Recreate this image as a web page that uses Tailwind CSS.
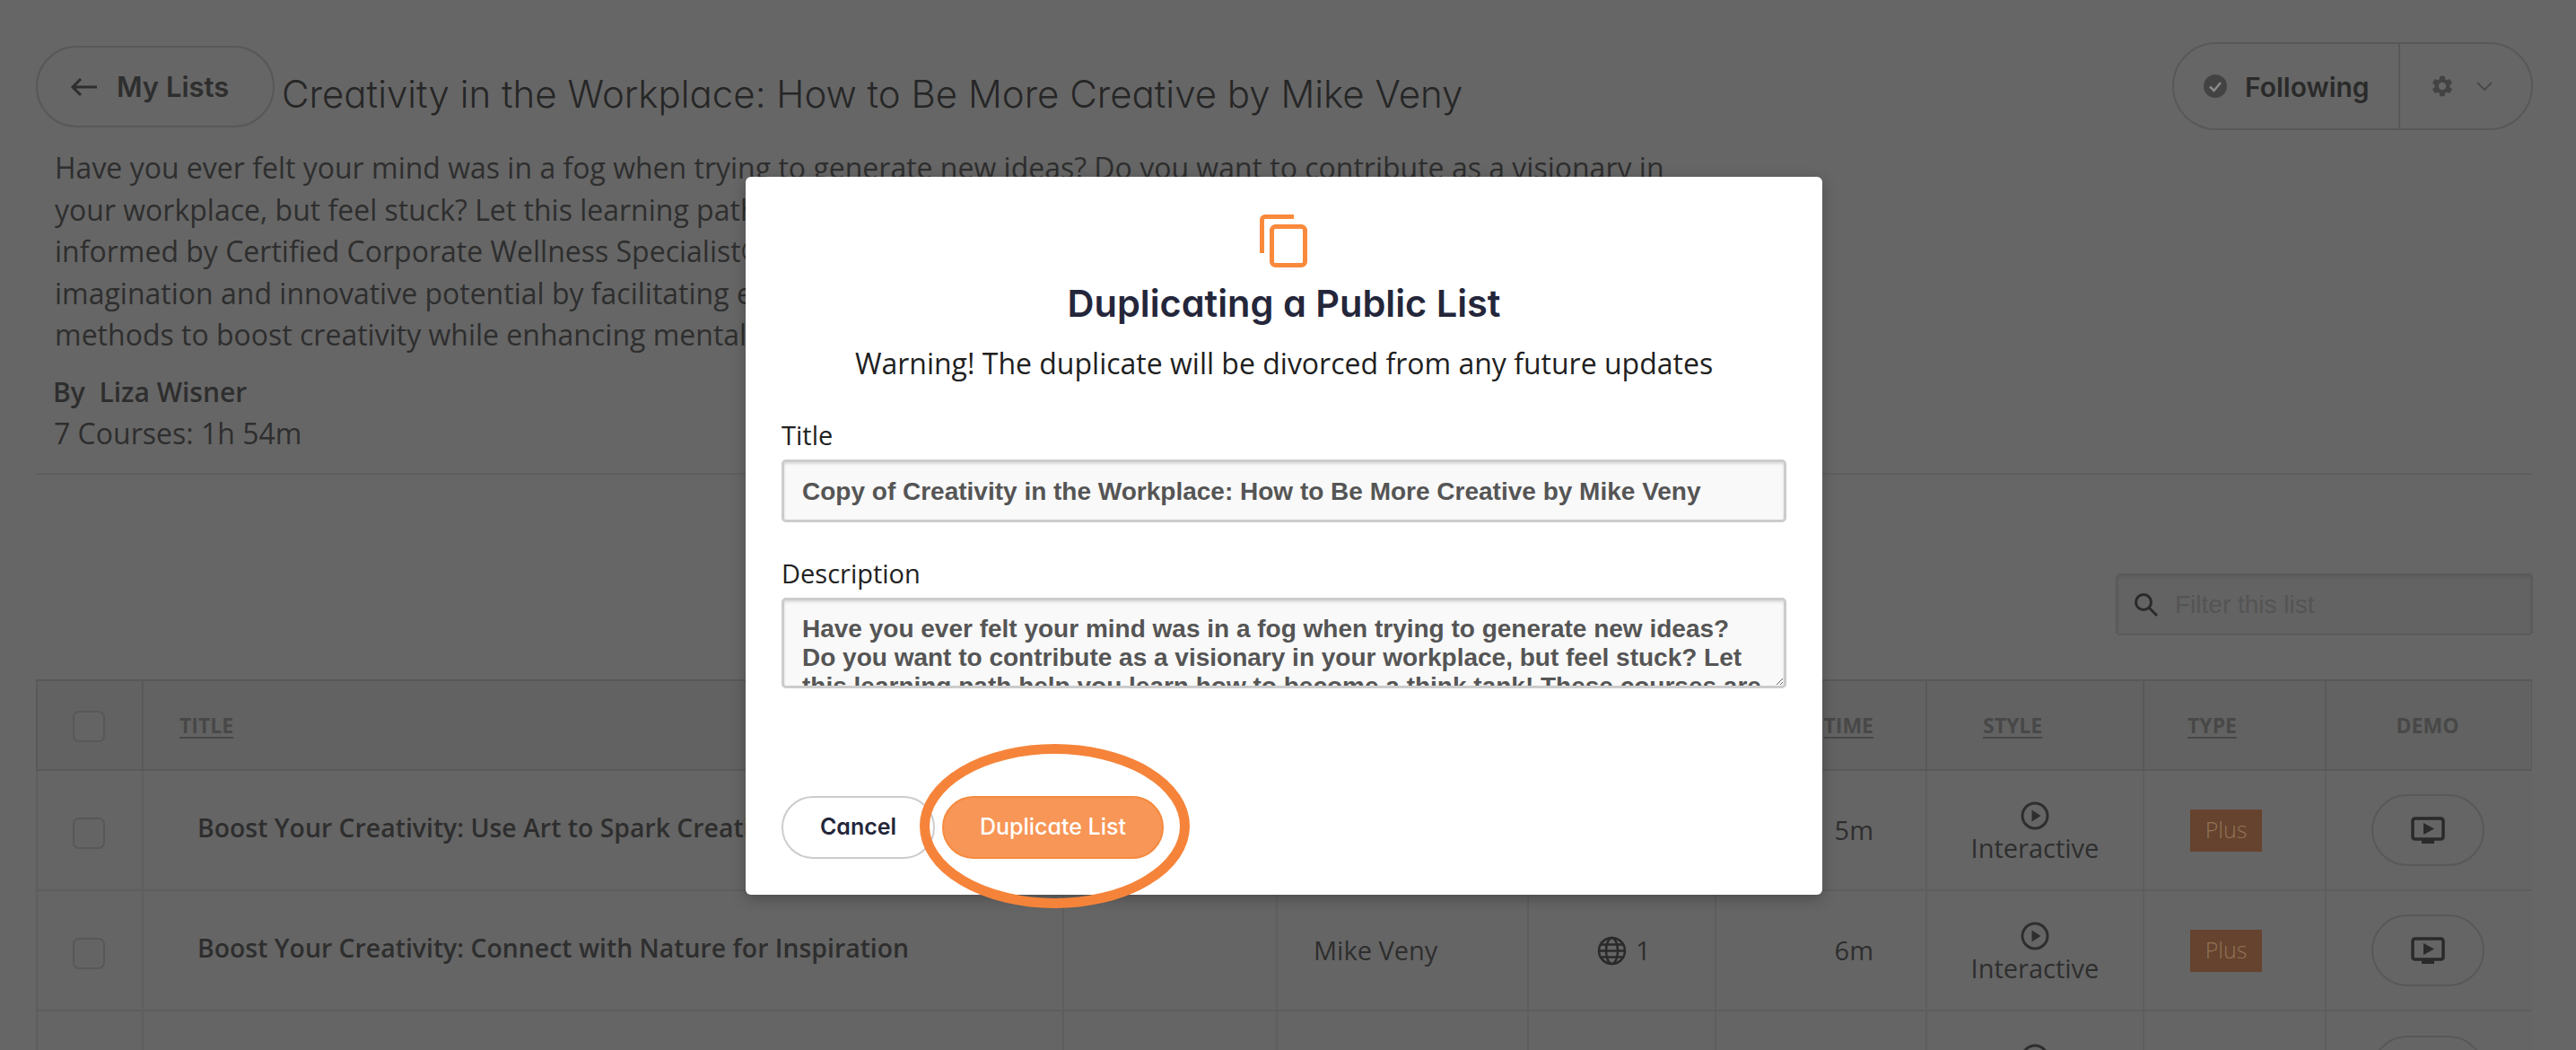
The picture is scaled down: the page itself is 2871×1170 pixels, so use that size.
<!DOCTYPE html>
<html lang="en">
  <head>
    <meta charset="UTF-8" />
    <title>Creativity in the Workplace</title>
    <script src="https://cdn.jsdelivr.net/npm/@tailwindcss/browser@4"></script>
  </head>

  <body class="relative w-[2871px] h-[1170px] overflow-hidden bg-[#666666] text-[#2e2e2e] font-['Open_Sans',sans-serif]">
    <!-- page behind the modal -->
    <div class="flex items-start pl-[40px] pr-[48px] pt-[47px]">
      <button class="mt-[4px] flex items-center w-[266px] h-[91px] rounded-[46px] border-2 border-[#585858] pl-[36px]">
        <svg class="w-[32px] h-[24px]" viewBox="0 0 32 24" fill="none" stroke="#2e2e2e" stroke-width="3">
          <path d="M30 12H3M12 3l-9 9 9 9" />
        </svg>
        <span class="ml-[20px] mt-[2px] text-[31px] font-semibold font-['Inter',sans-serif] [font-feature-settings:'cv11'] text-[#2e2e2e]">My Lists</span>
      </button>
      <h1 class="ml-[8px] mt-[29px] text-[42px] leading-[58px] font-light font-['Inter',sans-serif] [font-feature-settings:'cv11'] whitespace-nowrap text-[#262626]">Creativity in the Workplace: How to Be More Creative by Mike Veny</h1>
      <div class="ml-auto flex items-stretch w-[402px] h-[98px] rounded-[49px] border-2 border-[#585858]">
        <div class="flex items-center w-[250px] pl-[33px]">
          <svg class="w-[26px] h-[26px]" viewBox="0 0 26 26">
            <circle cx="13" cy="13" r="13" fill="#434343" />
            <path d="M7 13.5l4.5 4.5L19 9" fill="none" stroke="#8a8a8a" stroke-width="2.5" />
          </svg>
          <span class="ml-[20px] mt-[2px] text-[30px] font-semibold font-['Inter',sans-serif] [font-feature-settings:'cv11'] text-[#2a2a2a]">Following</span>
        </div>
        <div class="flex items-center border-l-2 border-[#585858] pl-[33px]">
          <svg class="w-[28px] h-[28px]" viewBox="0 0 24 24" fill="#434343">
            <path d="M19.14 12.94c.04-.3.06-.61.06-.94 0-.32-.02-.64-.07-.94l2.03-1.58a.49.49 0 0 0 .12-.61l-1.92-3.32a.488.488 0 0 0-.59-.22l-2.39.96c-.5-.38-1.03-.7-1.62-.94l-.36-2.54a.484.484 0 0 0-.48-.41h-3.84c-.24 0-.43.17-.47.41l-.36 2.54c-.59.24-1.13.57-1.62.94l-2.39-.96c-.22-.08-.47 0-.59.22L2.74 8.87c-.12.21-.08.47.12.61l2.03 1.58c-.05.3-.09.63-.09.94s.02.64.07.94l-2.03 1.58a.49.49 0 0 0-.12.61l1.92 3.32c.12.22.37.29.59.22l2.39-.96c.5.38 1.03.7 1.62.94l.36 2.54c.05.24.24.41.48.41h3.84c.24 0 .44-.17.47-.41l.36-2.54c.59-.24 1.13-.56 1.62-.94l2.39.96c.22.08.47 0 .59-.22l1.92-3.32c.12-.22.07-.47-.12-.61l-2.01-1.58zM12 15.6c-1.98 0-3.6-1.62-3.6-3.6s1.62-3.6 3.6-3.6 3.6 1.62 3.6 3.6-1.62 3.6-3.6 3.6z" />
          </svg>
          <svg class="ml-[23px] w-[20px] h-[14px]" viewBox="0 0 20 14" fill="none" stroke="#4a4a4a" stroke-width="2">
            <path d="M2 3l8 8 8-8" />
          </svg>
        </div>
      </div>
    </div>

    <p class="mt-[19px] ml-[61px] text-[32px] leading-[46.5px] whitespace-nowrap">
      Have you ever felt your mind was in a fog when trying to generate new ideas? Do you want to contribute as a visionary in<br />
      your workplace, but feel stuck? Let this learning path help you learn how to become a think tank! These courses are<br />
      informed by Certified Corporate Wellness Specialist©<br />
      imagination and innovative potential by facilitating e<br />
      methods to boost creativity while enhancing mental
    </p>
    <p class="mt-[17px] ml-[59px] text-[30px] leading-[46.5px] font-semibold">By&nbsp; Liza Wisner</p>
    <p class="ml-[60px] text-[32px] leading-[46px]">7 Courses: 1h 54m</p>
    <hr class="mt-[21px] ml-[40px] w-[2782px] border-t-2 border-[#5e5e5e]" />

    <div class="mt-[110px] ml-[2358px] flex items-center w-[465px] h-[69px] rounded-[5px] border-2 border-[#5a5a5a] bg-[#636363] shadow-[inset_0_2px_3px_#5a5a5a] pl-[18px]">
      <svg class="w-[28px] h-[28px]" viewBox="0 0 28 28" fill="none" stroke="#2a2a2a" stroke-width="3">
        <circle cx="11" cy="11" r="8.5" />
        <path d="M17 17l9 9" />
      </svg>
      <span class="ml-[18px] text-[28px] font-['Liberation_Sans',sans-serif] text-[#545454]">Filter this list</span>
    </div>

    <div class="mt-[49px] ml-[40px] w-[2782px] h-[413px] overflow-hidden">
      <table class="w-full table-fixed border-collapse bg-[#656565] text-[#2e2e2e]">
        <colgroup>
          <col class="w-[118px]" />
          <col class="w-[1026px]" />
          <col class="w-[238px]" />
          <col class="w-[280px]" />
          <col class="w-[209px]" />
          <col class="w-[235px]" />
          <col class="w-[242px]" />
          <col class="w-[203px]" />
          <col class="w-[231px]" />
        </colgroup>
        <thead>
          <tr class="h-[100px] bg-[#626262] text-[23px] font-bold text-[#484848]">
            <th class="border-2 border-[#595959] pr-[2px] text-center">
              <span class="inline-block align-middle w-[36px] h-[35px] rounded-[7px] border-2 border-[#585858] bg-[#646464]"></span>
            </th>
            <th class="border-2 border-[#595959] pl-[40px] text-left"><span class="underline underline-offset-4">TITLE</span></th>
            <th class="border-2 border-[#595959]"></th>
            <th class="border-2 border-[#595959]"></th>
            <th class="border-2 border-[#595959]"></th>
            <th class="border-2 border-[#595959] pr-[58px] text-right"><span class="underline underline-offset-4">TIME</span></th>
            <th class="border-2 border-[#595959] pl-[62px] text-left"><span class="underline underline-offset-4">STYLE</span></th>
            <th class="border-2 border-[#595959] pl-[48px] text-left"><span class="underline underline-offset-4">TYPE</span></th>
            <th class="border-2 border-[#595959] border-r-4 pr-[3px] text-center">DEMO</th>
          </tr>
        </thead>
        <tbody class="text-[29px]">
          <tr class="h-[134px]">
            <td class="border-2 border-[#5e5e5e] pr-[2px] text-center">
              <span class="inline-block align-middle w-[36px] h-[35px] rounded-[7px] border-2 border-[#585858] bg-[#646464]"></span>
            </td>
            <td class="border-2 border-[#5e5e5e] pl-[60px] pb-[6px] text-[28.400px] font-semibold whitespace-nowrap overflow-hidden">Boost Your Creativity: Use Art to Spark Creativity</td>
            <td class="border-2 border-[#5e5e5e]"></td>
            <td class="border-2 border-[#5e5e5e]"></td>
            <td class="border-2 border-[#5e5e5e]"></td>
            <td class="border-2 border-[#5e5e5e] pr-[58px] text-right">5m</td>
            <td class="border-2 border-[#5e5e5e] pt-[8px] text-center leading-[40px]">
              <svg class="mx-auto w-[32px] h-[32px]" viewBox="0 0 32 32">
                <circle cx="16" cy="16" r="14" fill="none" stroke="#2e2e2e" stroke-width="3" />
                <path d="M12.5 9.5l10 6.5-10 6.5z" fill="#2e2e2e" />
              </svg>
              Interactive
            </td>
            <td class="border-2 border-[#5e5e5e] pl-[51px]">
              <span class="flex items-center justify-center w-[80px] h-[47px] bg-[#66432e] text-[25px] font-light text-[#907358]">Plus</span>
            </td>
            <td class="border-2 border-[#5e5e5e] pr-[3px] text-center">
              <button class="inline-flex items-center justify-center align-middle w-[126px] h-[80px] rounded-[40px] border-2 border-[#585858]">
                <svg class="w-[38px] h-[30px]" viewBox="0 0 38 30">
                  <rect x="2" y="2" width="34" height="23" rx="2.5" fill="none" stroke="#2a2a2a" stroke-width="3.5" />
                  <path d="M14 7l12 6.5L14 20z" fill="#2a2a2a" />
                  <rect x="12" y="26" width="14" height="4" fill="#2a2a2a" />
                </svg>
              </button>
            </td>
          </tr>
          <tr class="h-[134px]">
            <td class="border-2 border-[#5e5e5e] pr-[2px] text-center">
              <span class="inline-block align-middle w-[36px] h-[35px] rounded-[7px] border-2 border-[#585858] bg-[#646464]"></span>
            </td>
            <td class="border-2 border-[#5e5e5e] pl-[60px] pb-[6px] text-[28.400px] font-semibold whitespace-nowrap">Boost Your Creativity: Connect with Nature for Inspiration</td>
            <td class="border-2 border-[#5e5e5e]"></td>
            <td class="border-2 border-[#5e5e5e] pl-[40px]">Mike Veny</td>
            <td class="border-2 border-[#5e5e5e] pl-[76px]">
              <span class="flex items-center gap-[10px]">
                <svg class="w-[33px] h-[33px]" viewBox="0 0 33 33" fill="none" stroke="#2a2a2a" stroke-width="2.5">
                  <circle cx="16.5" cy="16.5" r="14.5" />
                  <ellipse cx="16.5" cy="16.5" rx="6.5" ry="14.5" />
                  <path d="M2 16.5h29M4 9.5h25M4 23.5h25" />
                </svg>
                1
              </span>
            </td>
            <td class="border-2 border-[#5e5e5e] pr-[58px] text-right">6m</td>
            <td class="border-2 border-[#5e5e5e] pt-[8px] text-center leading-[40px]">
              <svg class="mx-auto w-[32px] h-[32px]" viewBox="0 0 32 32">
                <circle cx="16" cy="16" r="14" fill="none" stroke="#2e2e2e" stroke-width="3" />
                <path d="M12.5 9.5l10 6.5-10 6.5z" fill="#2e2e2e" />
              </svg>
              Interactive
            </td>
            <td class="border-2 border-[#5e5e5e] pl-[51px]">
              <span class="flex items-center justify-center w-[80px] h-[47px] bg-[#66432e] text-[25px] font-light text-[#907358]">Plus</span>
            </td>
            <td class="border-2 border-[#5e5e5e] pr-[3px] text-center">
              <button class="inline-flex items-center justify-center align-middle w-[126px] h-[80px] rounded-[40px] border-2 border-[#585858]">
                <svg class="w-[38px] h-[30px]" viewBox="0 0 38 30">
                  <rect x="2" y="2" width="34" height="23" rx="2.5" fill="none" stroke="#2a2a2a" stroke-width="3.5" />
                  <path d="M14 7l12 6.5L14 20z" fill="#2a2a2a" />
                  <rect x="12" y="26" width="14" height="4" fill="#2a2a2a" />
                </svg>
              </button>
            </td>
          </tr>
          <tr class="h-[134px] align-top">
            <td class="border-2 border-[#5e5e5e]"></td>
            <td class="border-2 border-[#5e5e5e]"></td>
            <td class="border-2 border-[#5e5e5e]"></td>
            <td class="border-2 border-[#5e5e5e]"></td>
            <td class="border-2 border-[#5e5e5e]"></td>
            <td class="border-2 border-[#5e5e5e]"></td>
            <td class="border-2 border-[#5e5e5e] pt-[36px]">
              <svg class="mx-auto w-[32px] h-[32px]" viewBox="0 0 32 32">
                <circle cx="16" cy="16" r="14" fill="none" stroke="#2e2e2e" stroke-width="3" />
                <path d="M12.5 9.5l10 6.5-10 6.5z" fill="#2e2e2e" />
              </svg>
            </td>
            <td class="border-2 border-[#5e5e5e]"></td>
            <td class="border-2 border-[#5e5e5e] pt-[27px] pr-[3px] text-center">
              <button class="inline-flex align-top w-[126px] h-[80px] rounded-[40px] border-2 border-[#585858]"></button>
            </td>
          </tr>
        </tbody>
      </table>
    </div>

    <!-- modal -->
    <div class="absolute left-[831px] top-[197px] flex flex-col w-[1200px] h-[800px] rounded-[6px] bg-white px-[40px] shadow-[0_4px_16px_rgba(0,0,0,0.25)] text-[#222222]">
      <svg class="mt-[42px] mx-auto w-[54px] h-[59px]" viewBox="0 0 54 59" fill="none" stroke="#f98a3c" stroke-width="5">
        <path d="M38 2.5H6a3.5 3.5 0 0 0-3.500 3.500V43" />
        <rect x="13.500" y="13.500" width="37" height="43" rx="4" />
      </svg>
      <h2 class="mt-[12px] text-center text-[41.500px] leading-[56px] font-semibold font-['Inter',sans-serif] [font-feature-settings:'cv11'] text-[#24263a]">Duplicating a Public List</h2>
      <p class="mt-[17px] text-center text-[32px] leading-[44px] text-[#1f1f1f]">Warning! The duplicate will be divorced from any future updates</p>

      <label class="mt-[38px] text-[29px] leading-[40px] font-medium">Title</label>
      <input
        type="text"
        value="Copy of Creativity in the Workplace: How to Be More Creative by Mike Veny"
        class="mt-[7px] h-[70px] w-full rounded-[5px] border-[3px] border-[#cccccc] bg-[#f9f9f9] px-[20px] pt-[2px] font-['Liberation_Sans',sans-serif] text-[28px] font-bold text-[#555555] shadow-[inset_0_2px_3px_rgba(0,0,0,0.12)]"
      />

      <label class="mt-[37px] text-[29px] leading-[40px] font-medium">Description</label>
      <textarea
        class="mt-[7px] h-[101px] w-full resize-y overflow-hidden rounded-[5px] border-[3px] border-[#cccccc] bg-[#f9f9f9] px-[20px] pt-[16px] font-['Liberation_Sans',sans-serif] text-[28px] leading-[32px] font-bold text-[#555555] shadow-[inset_0_2px_3px_rgba(0,0,0,0.12)]"
      >Have you ever felt your mind was in a fog when trying to generate new ideas? Do you want to contribute as a visionary in your workplace, but feel stuck? Let this learning path help you learn how to become a think tank! These courses are informed by Certified Corporate Wellness Specialists</textarea>

      <div class="mt-[120px] flex gap-[8px]">
        <button class="h-[70px] w-[171px] rounded-[35px] border-2 border-[#cccccc] bg-white text-[25px] font-semibold font-['Inter',sans-serif] [font-feature-settings:'cv11'] text-[#24263a]">Cancel</button>
        <button class="h-[70px] w-[247px] rounded-[35px] border-2 border-[#f58a3f] bg-[#f79656] text-[25px] font-medium font-['Inter',sans-serif] [font-feature-settings:'cv11'] text-white">Duplicate List</button>
      </div>
    </div>

    <!-- hand-drawn annotation over the primary button -->
    <svg class="absolute left-[1025px] top-[829px] w-[301px] h-[183px] pointer-events-none" viewBox="0 0 301 183" fill="none">
      <ellipse cx="150.500" cy="91.500" rx="145" ry="86" stroke="#f5843a" stroke-width="11" />
    </svg>
  </body>
</html>
